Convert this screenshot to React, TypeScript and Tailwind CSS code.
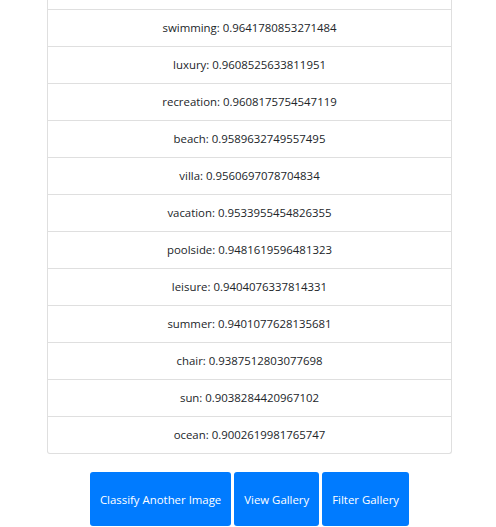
import React from 'react';

const tags: [string, string][] = [
  ['swimming', '0.9641780853271484'],
  ['luxury', '0.9608525633811951'],
  ['recreation', '0.9608175754547119'],
  ['beach', '0.9589632749557495'],
  ['villa', '0.9560697078704834'],
  ['vacation', '0.9533955454826355'],
  ['poolside', '0.9481619596481323'],
  ['leisure', '0.9404076337814331'],
  ['summer', '0.9401077628135681'],
  ['chair', '0.9387512803077698'],
  ['sun', '0.9038284420967102'],
  ['ocean', '0.9002619981765747'],
];

export default function App() {
  return (
    <div className="min-h-[527px] bg-white text-[11.4px] leading-[18px] text-[#212529] [font-family:'Open_Sans',sans-serif]">
      <ul className="ml-[47px] w-[405px] rounded-b-[3px] border-x border-b border-[#dfdfdf]">
        <li className="h-[9px]" />
        {tags.map(([name, score]) => (
          <li key={name} className="border-t border-[#dfdfdf] py-[9px] text-center">
            {name}: {score}
          </li>
        ))}
      </ul>
      <div className="mt-[18px] flex justify-center gap-[3px] pl-[3px]">
        <button className="h-[54px] rounded-[3px] bg-[#007bff] px-[10px] pt-[2px] text-white">Classify Another Image</button>
        <button className="h-[54px] rounded-[3px] bg-[#007bff] px-[10px] pt-[2px] text-white">View Gallery</button>
        <button className="h-[54px] rounded-[3px] bg-[#007bff] px-[10px] pt-[2px] text-white">Filter Gallery</button>
      </div>
    </div>
  );
}
